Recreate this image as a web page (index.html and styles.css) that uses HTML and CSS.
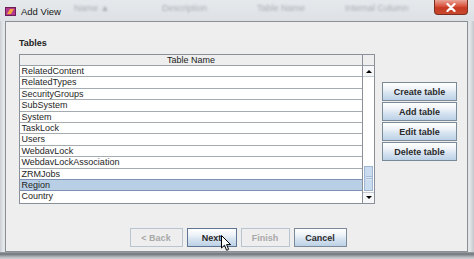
FILE: index.html
```html
<!DOCTYPE html>
<html>
	<head>
		<meta charset="utf-8">
		<title>Add View</title>
		<link rel="stylesheet" href="styles.css">
	</head>
	<body>
		<div class="window">
			<div class="titlebar">
				<svg class="app-icon" width="11" height="9" viewBox="0 0 11 9">
					<rect x="0.5" y="0.5" width="10" height="8" fill="#b2388f" stroke="#6d1d55"/>
					<path d="M2 7 L5 2 L9 2 L6 7 Z" fill="#f2a33a"/>
				</svg>
				<span class="title">Add View</span>
				<div class="ghost">
					<span class="g1">Name ▲</span>
					<span class="g2">Description</span>
					<span class="g3">Table Name</span>
					<span class="g4">Internal Column</span>
				</div>
				<div class="close">
					<svg width="10" height="9" viewBox="0 0 10 9">
						<path d="M1.5 1 L8.5 8 M8.5 1 L1.5 8" stroke="#ffffff" stroke-width="2.2" stroke-linecap="round"/>
					</svg>
				</div>
			</div>

			<div class="panel">
				<div class="section-label">Tables</div>

				<div class="content">
					<div class="table">
						<div class="table-main">
							<div class="thead">Table Name</div>
							<div class="row">RelatedContent</div>
							<div class="row">RelatedTypes</div>
							<div class="row">SecurityGroups</div>
							<div class="row">SubSystem</div>
							<div class="row">System</div>
							<div class="row">TaskLock</div>
							<div class="row">Users</div>
							<div class="row">WebdavLock</div>
							<div class="row">WebdavLockAssociation</div>
							<div class="row">ZRMJobs</div>
							<div class="row selected">Region</div>
							<div class="row last">Country</div>
						</div>
						<div class="vscroll">
							<div class="corner"></div>
							<div class="arrow"><span class="tri-up"></span></div>
							<div class="track"><div class="thumb"></div></div>
							<div class="arrow"><span class="tri-down"></span></div>
						</div>
					</div>

					<div class="side-buttons">
						<div class="btn">Create table</div>
						<div class="btn">Add table</div>
						<div class="btn">Edit table</div>
						<div class="btn">Delete table</div>
					</div>
				</div>

				<div class="footer">
					<div class="btn disabled w-back">&lt; Back</div>
					<div class="btn focused w-next">Next
						<svg class="cursor" width="11" height="17" viewBox="0 0 11 17">
							<path d="M0.5 0.5 L0.5 13 L3.5 10.2 L5.6 15.3 L7.6 14.4 L5.6 9.6 L9.6 9.6 Z" fill="#ffffff" stroke="#000000" stroke-width="1" stroke-linejoin="round"/>
						</svg>
					</div>
					<div class="btn disabled w-finish">Finish</div>
					<div class="btn w-cancel">Cancel</div>
				</div>
			</div>
			<div class="frame-bottom"></div>
		</div>
	</body>
</html>
```

FILE: styles.css
```css
* {
	box-sizing: border-box;
}
body {
	margin: 0;
	padding: 0;
	background: #d8dce1;
	font-family: "Liberation Sans", Arial, sans-serif;
	font-size: 9px;
	color: #222222;
}
.window {
	width: 474px;
	height: 259px;
	display: flex;
	flex-direction: column;
	overflow: hidden;
	background: linear-gradient(to right, #c9cdd2 0px, #e4e7ea 3px, #e2e5e8 470px, #c4c8cc 474px);
}

/* title bar */
.titlebar {
	height: 21px;
	display: flex;
	align-items: flex-start;
	padding-left: 5px;
	background: linear-gradient(#e6e9ec, #dde1e5);
	overflow: hidden;
}
.app-icon {
	margin-top: 7px;
	flex: none;
}
.title {
	margin-left: 5px;
	margin-top: 6px;
	font-size: 9.5px;
	line-height: 11px;
	color: #1a1a1a;
	flex: none;
}
.ghost {
	flex: 1;
	display: flex;
	margin-top: 3px;
	color: #a9afb6;
	font-size: 9px;
	filter: blur(1.2px);
}
.ghost span {
	flex: none;
}
.ghost .g1 {
	margin-left: 13px;
	width: 88px;
}
.ghost .g2 {
	width: 95px;
}
.ghost .g3 {
	width: 88px;
}
.close {
	flex: none;
	width: 34px;
	height: 15px;
	margin-right: 6px;
	display: flex;
	align-items: center;
	justify-content: center;
	background: linear-gradient(#e9a497, #d9533c 45%, #c53a22 55%, #c8492e);
	border: 1px solid #7e2e20;
	border-top: none;
	border-radius: 0 0 4px 4px;
}

/* dialog panel */
.panel {
	height: 231px;
	margin-left: 5px;
	width: 463px;
	border: 1px solid #8b8f94;
	background: #eeeeee;
	display: flex;
	flex-direction: column;
	padding: 16px 10px 4px 13px;
}
.section-label {
	font-weight: bold;
	line-height: 10px;
	margin-bottom: 6px;
	color: #222222;
}
.content {
	display: flex;
	gap: 7px;
	align-items: flex-start;
}

/* table */
.table {
	width: 356px;
	display: flex;
	border: 1px solid #8a9099;
	background: #ffffff;
}
.table-main {
	flex: 1;
	display: flex;
	flex-direction: column;
}
.thead {
	height: 11px;
	line-height: 10px;
	text-align: center;
	background: #eeeeee;
	border-bottom: 1px solid #9aa0a8;
	color: #222222;
}
.row {
	height: 11.4px;
	line-height: 10.4px;
	padding-left: 1.5px;
	border-bottom: 1px solid #a6abb2;
	color: #1e1e1e;
	white-space: nowrap;
}
.row.last {
	border-bottom: none;
}
.row.selected {
	background: #b8cfe5;
	border-top: 1px solid #7e93b3;
	border-bottom: 1px solid #7e93b3;
	margin-top: -1px;
	height: 12.4px;
}
.vscroll {
	width: 12px;
	flex: none;
	display: flex;
	flex-direction: column;
	border-left: 1px solid #8a9099;
	background: #f4f6f9;
}
.corner {
	height: 11px;
	background: #eeeeee;
	border-bottom: 1px solid #9aa0a8;
}
.arrow {
	height: 11px;
	display: flex;
	align-items: center;
	justify-content: center;
	background: #f6f7f9;
	border-bottom: 1px solid #c4c9d0;
}
.arrow:last-child {
	border-bottom: none;
	border-top: 1px solid #c4c9d0;
}
.tri-up {
	width: 0;
	height: 0;
	border-left: 3px solid transparent;
	border-right: 3px solid transparent;
	border-bottom: 3px solid #000000;
}
.tri-down {
	width: 0;
	height: 0;
	border-left: 3px solid transparent;
	border-right: 3px solid transparent;
	border-top: 3px solid #000000;
}
.track {
	flex: 1;
	display: flex;
	flex-direction: column;
	justify-content: flex-end;
	padding: 0 1px 1px 1px;
	background: #ffffff;
}
.thumb {
	height: 25px;
	background: #c9dbee;
	border: 1px solid #9fb6d2;
	position: relative;
}
.thumb::after {
	content: "";
	display: block;
	margin: 9px auto 0;
	width: 6px;
	height: 4px;
	background: repeating-linear-gradient(#a7bcd6 0px, #a7bcd6 1px, #dde8f4 1px, #dde8f4 2px);
}

/* buttons */
.side-buttons {
	width: 75px;
	margin-top: 28px;
	display: flex;
	flex-direction: column;
	gap: 1px;
}
.btn {
	height: 19px;
	display: flex;
	align-items: center;
	justify-content: center;
	font-weight: bold;
	color: #2b2b2b;
	border: 1px solid #7a8a99;
	background: linear-gradient(#ffffff, #eef3f8 35%, #d6e3f0 60%, #bcd1e6);
	white-space: nowrap;
}
.btn.disabled {
	color: #a8a8a8;
	border-color: #b8c4d0;
	background: #eeeeee;
	font-weight: bold;
}
.btn.focused {
	border-color: #5e7594;
	position: relative;
}
.footer {
	margin-top: auto;
	display: flex;
	justify-content: center;
	gap: 4px;
}
.w-back {
	width: 53px;
}
.w-next {
	width: 50px;
}
.w-finish {
	width: 49px;
}
.w-cancel {
	width: 53px;
}
.cursor {
	position: absolute;
	left: 33px;
	top: 6px;
}

.frame-bottom {
	flex: 1;
	background: linear-gradient(#9ea3a9, #6f747a 2px, #b4b9be 5px, #cfd3d7);
}
```
